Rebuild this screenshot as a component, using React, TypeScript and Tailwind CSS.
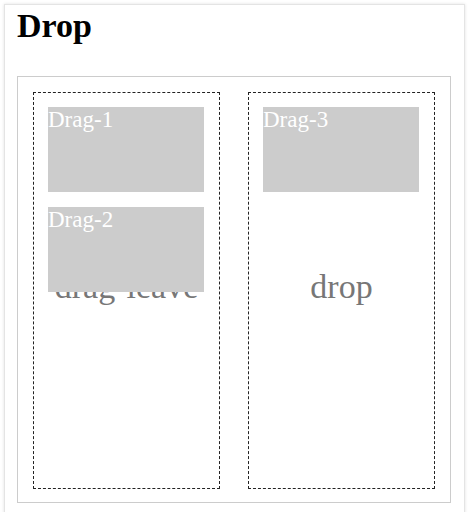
import React from "react";

const serif = { fontFamily: '"Liberation Serif", "Times New Roman", serif' };

const DragItem: React.FC<{ label: string }> = ({ label }) => (
  <div className="relative z-10 h-[85px] w-[156px] bg-[#cccccc] pt-[1px] text-[23px] leading-none text-white">
    {label}
  </div>
);

const DropColumn: React.FC<{ label: string; items: string[] }> = ({ label, items }) => (
  <div className="relative h-[397px] w-[187px] border border-dashed border-[#222222] px-[14px] pt-[14px]">
    {/* texto de estado, queda detrás de los items */}
    <div className="absolute inset-0 flex items-center justify-center pb-[8px] text-[34px] text-[#777777]">
      {label}
    </div>
    <div className="flex flex-col gap-[15px]">
      {items.map((item) => (
        <DragItem key={item} label={item} />
      ))}
    </div>
  </div>
);

const App: React.FC = () => {
  return (
    <div className="h-[512px] overflow-hidden bg-white pl-[4px] pt-[4px]" style={serif}>
      <div className="h-[520px] w-[461px] border border-[#e4e4e4] bg-white px-[12px] shadow-[0_0_3px_rgba(0,0,0,0.12)]">
        <h1 className="pt-[1px] text-[34px] font-bold leading-[39px] text-black">Drop</h1>

        {/* Contenedor principal */}
        <div className="mt-[31px] flex h-[427px] w-[434px] gap-[28px] border border-[#cccccc] p-[15px]">
          <DropColumn label="drag-leave" items={["Drag-1", "Drag-2"]} />
          <DropColumn label="drop" items={["Drag-3"]} />
        </div>
      </div>
    </div>
  );
};

export default App;
